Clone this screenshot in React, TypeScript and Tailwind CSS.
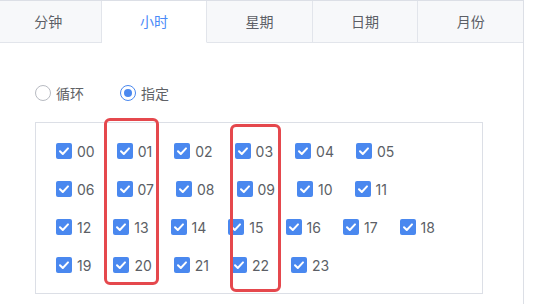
import { useState } from "react";

const tabs = ["分钟", "小时", "星期", "日期", "月份"];

const rows = [
  [0, 1, 2, 3, 4, 5],
  [6, 7, 8, 9, 10, 11],
  [12, 13, 14, 15, 16, 17, 18],
  [19, 20, 21, 22, 23],
];

function Check() {
  return (
    <span className="w-[16px] h-[16px] rounded-[2px] bg-[#4a88ef] flex items-center justify-center shrink-0">
      <svg width="16" height="16" viewBox="0 0 16 16" fill="none">
        <path d="M4 8.2 L6.8 11 L12 5.4" stroke="#fff" strokeWidth="2" strokeLinecap="round" strokeLinejoin="round" />
      </svg>
    </span>
  );
}

export default function App() {
  const [active, setActive] = useState(1);
  const [mode, setMode] = useState("assign");

  return (
    <div className="relative w-[555px] h-[304px] overflow-hidden bg-white font-['Inter','Noto_Sans_CJK_SC',sans-serif] text-[14px] text-[#606266]">
      <div className="ml-[-5px] w-[529px] h-[340px] border border-[#dcdfe6]">
        <div className="flex h-[42px] bg-[#f7f8fa]">
          {tabs.map((t, i) => (
            <button
              key={t}
              onClick={() => setActive(i)}
              className={
                "flex-1 flex items-center justify-center border-b " +
                (i < tabs.length - 1 ? "border-r border-r-[#e2e5eb] " : "") +
                (i === active ? "bg-white border-b-white text-[#4a8af8]" : "border-b-[#e2e5eb] text-[#5c5f66]")
              }
            >
              {t}
            </button>
          ))}
        </div>

        <div className="pl-[39px] pt-[42px]">
          <div className="flex items-center gap-[36px] h-[16px]">
            <label className="flex items-center gap-[5px] cursor-pointer" onClick={() => setMode("loop")}>
              <span className={"w-[16px] h-[16px] rounded-full border flex items-center justify-center " + (mode === "loop" ? "border-[#4a88ef]" : "border-[#b8bbc2]")}>
                {mode === "loop" && <span className="w-[8px] h-[8px] rounded-full bg-[#4a88ef]" />}
              </span>
              循环
            </label>
            <label className="flex items-center gap-[5px] cursor-pointer" onClick={() => setMode("assign")}>
              <span className={"w-[16px] h-[16px] rounded-full border flex items-center justify-center " + (mode === "assign" ? "border-[#4a88ef]" : "border-[#b8bbc2]")}>
                {mode === "assign" && <span className="w-[8px] h-[8px] rounded-full bg-[#4a88ef]" />}
              </span>
              指定
            </label>
          </div>

          <div className="mt-[21px] w-[448px] border border-[#dcdfe6] p-[20px] flex flex-col gap-[22px]">
            {rows.map((row, r) => (
              <div key={r} className="flex items-center h-[16px]">
                {row.map((h) => (
                  <label key={h} className="flex items-center gap-[5px] mr-[22px] text-[#5c5f66]">
                    <Check />
                    {String(h).padStart(2, "0")}
                  </label>
                ))}
              </div>
            ))}
          </div>
        </div>
      </div>

      <div className="absolute left-[104px] top-[118px] w-[55px] h-[167px] border-[3px] border-[#e5484d] rounded-[6px]" />
      <div className="absolute left-[230px] top-[124px] w-[51px] h-[168px] border-[3px] border-[#e5484d] rounded-[6px]" />
    </div>
  );
}
